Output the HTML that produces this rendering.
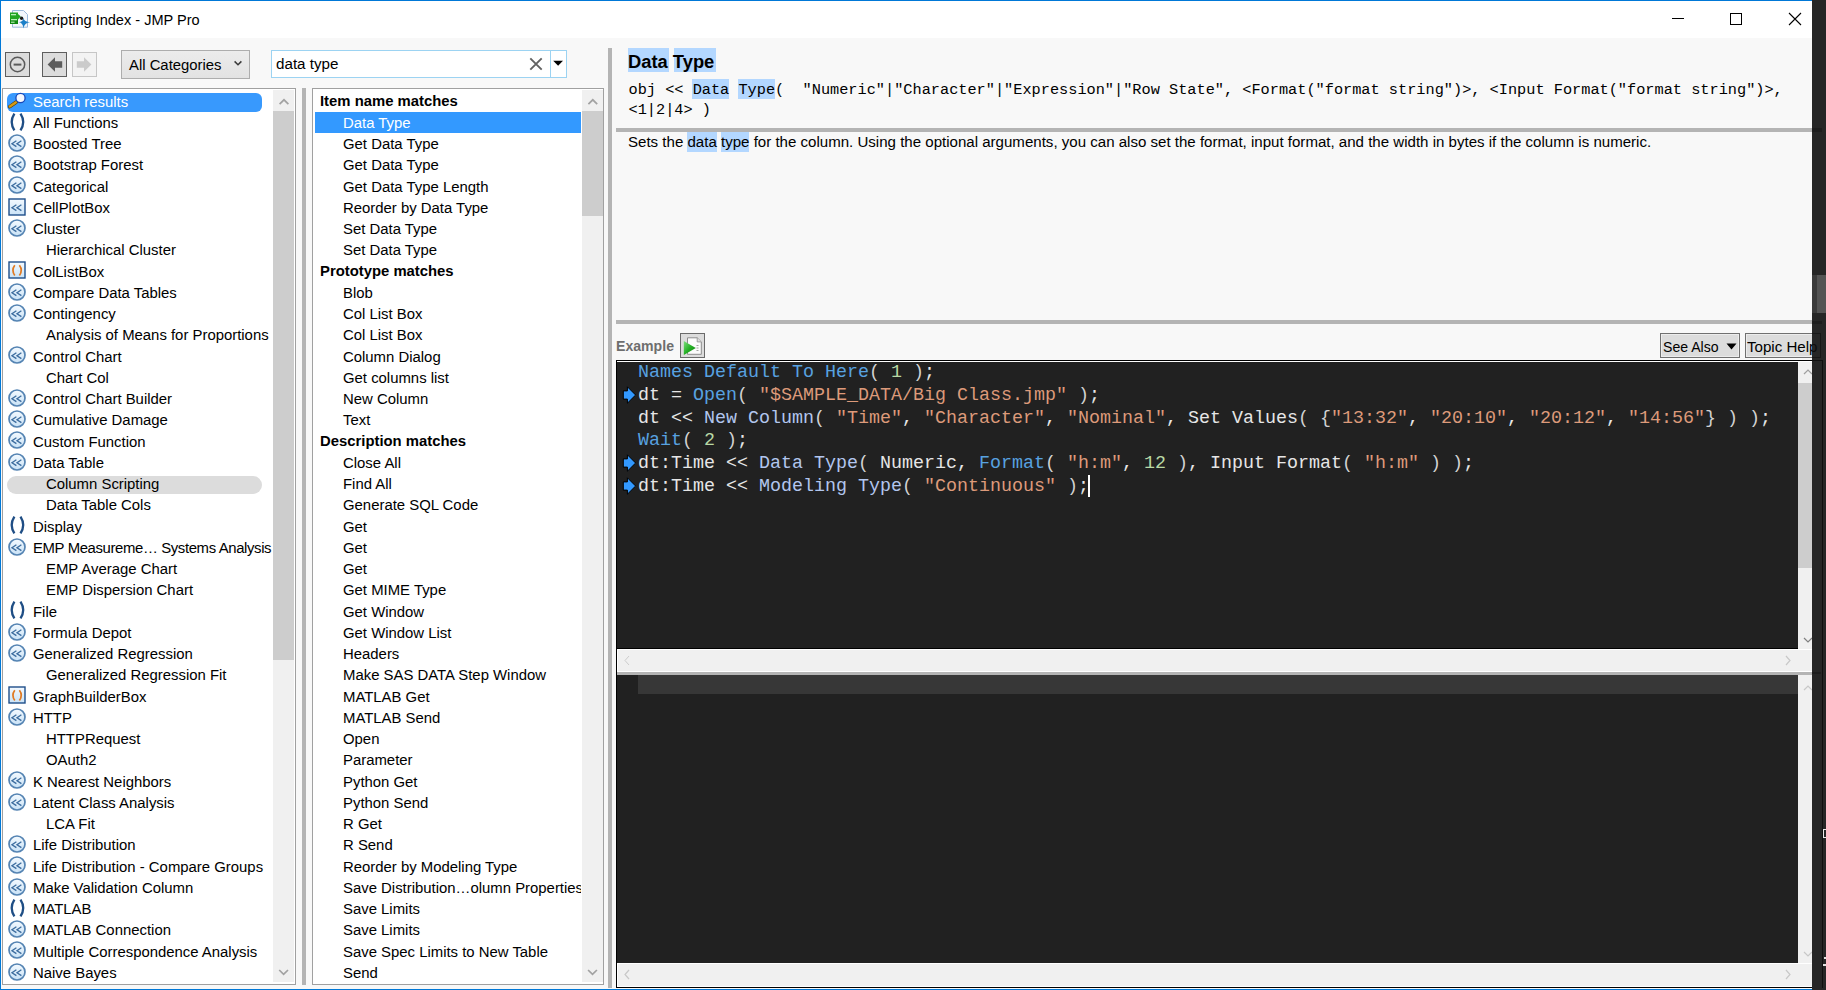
<!DOCTYPE html><html><head><meta charset="utf-8"><title>Scripting Index - JMP Pro</title><style>
*{margin:0;padding:0;box-sizing:border-box}
html,body{width:1826px;height:990px;overflow:hidden;background:#f8f8f8;font-family:"Liberation Sans",sans-serif;color:#000}
.a{position:absolute}
.clip{overflow:hidden}
.panel{background:#fff;border:1px solid #a0a0a0}
.lt{font-size:14.9px;line-height:21.25px;height:21.25px;padding-top:0.9px;white-space:nowrap;color:#000}
.lt.w{color:#fff}
.lt.b{font-weight:bold;font-size:14.85px;padding-top:0.6px}
.sel{background:#3399ff}
.sel-pill{background:#3899fd;border-radius:6px}
.sub-pill{background:#dcdcdc;border-radius:9px}
.ic{overflow:visible}
.mono{font-family:"Liberation Mono",monospace;white-space:pre}
.code{font-family:"Liberation Mono",monospace;white-space:pre;font-size:18.33px;line-height:22.66px;color:#dcdcdc}
.sb{background:#f0f0f0}
.thumb{background:#cdcdcd}
.hl{background:#b3d7ff}

</style></head><body>
<svg width="0" height="0" style="position:absolute">
<defs>
<linearGradient id="gc" x1="0" y1="0" x2="0" y2="1"><stop offset="0" stop-color="#f4faff"/><stop offset="1" stop-color="#c9e2f6"/></linearGradient>
<symbol id="i-circ" viewBox="0 0 18 18"><circle cx="9" cy="9" r="8" fill="url(#gc)" stroke="#5584b3" stroke-width="1.7"/><path d="M8.4 6.8 L4.0 9.7 L8.4 12.6 M13.4 6.8 L9.0 9.7 L13.4 12.6" fill="none" stroke="#3d6d9f" stroke-width="1.35"/></symbol>
<symbol id="i-sq" viewBox="0 0 18 18"><rect x="1" y="1" width="16" height="16" fill="url(#gc)" stroke="#1f4f8a" stroke-width="1.4"/><path d="M8.4 6.8 L4.0 9.7 L8.4 12.6 M13.4 6.8 L9.0 9.7 L13.4 12.6" fill="none" stroke="#3d6d9f" stroke-width="1.35"/></symbol>
<symbol id="i-sqp" viewBox="0 0 18 18"><rect x="1" y="1" width="16" height="16" fill="url(#gc)" stroke="#1f4f8a" stroke-width="1.4"/><path d="M6.8 4.2 Q3.0 9.3 6.8 14.4 M11.4 4.2 Q15.2 9.3 11.4 14.4" fill="none" stroke="#e07a22" stroke-width="1.7"/></symbol>
<symbol id="i-paren" viewBox="0 0 18 18"><path d="M6.4 0.6 Q1.0 9 6.4 17.4 M12.5 0.6 Q17.9 9 12.5 17.4" fill="none" stroke="#1f4e85" stroke-width="2.3"/></symbol>
<symbol id="i-search" viewBox="0 0 18 18"><path d="M1.8 15.6 L8 11.2" stroke="#5a3c00" stroke-width="3.6" stroke-linecap="round"/><path d="M1.8 15.6 L8 11.2" stroke="#d39a14" stroke-width="2.4" stroke-linecap="round"/><circle cx="12.5" cy="7.05" r="4.6" fill="#f4f8ff" stroke="#1a48b8" stroke-width="1.3"/></symbol>
</defs></svg>

<!-- title bar -->
<div class="a" style="left:0;top:0;width:1812px;height:38px;background:#fff"></div>
<svg class="a" style="left:6px;top:6px" width="28" height="28" viewBox="6 6 28 28">
 <path d="M12.5 10.5 H23.5 L27.5 14.5 V27.2 H12.5 Z" fill="#f3f7fc" stroke="#9cbadb" stroke-width="1"/>
 <path d="M10 12.5 H18 V14 L20.8 16.5 L18 19.5 V24 H10 Z" fill="#22a622"/>
 <path d="M10 19.5 H18 V24 H10 Z" fill="#138a13"/>
 <rect x="11" y="14" width="5" height="1.3" fill="#b9f0b9"/>
 <rect x="11" y="19" width="6" height="1.3" fill="#b9f0b9"/>
 <rect x="11" y="21.6" width="3.6" height="1.3" fill="#a0e0a0"/>
 <circle cx="21.6" cy="18.3" r="1.7" fill="#1a1a1a"/>
 <path d="M23.5 18.3 Q24 21.6 30 22.2 Q24 22.8 23.5 28.6 Q23 22.8 19 22.2 Q23 21.6 23.5 18.3 Z" fill="#1a7fc8"/>
</svg>
<div class="a" style="left:35px;top:10px;font-size:14.55px;line-height:20px;white-space:nowrap">Scripting Index - JMP Pro</div>
<div class="a" style="left:1672px;top:18px;width:12px;height:1px;background:#000"></div>
<div class="a" style="left:1730px;top:13px;width:12px;height:12px;border:1px solid #000"></div>
<svg class="a" style="left:1788px;top:12px" width="14" height="14" viewBox="0 0 14 14"><path d="M1 1 L13 13 M13 1 L1 13" stroke="#000" stroke-width="1.1"/></svg>
<!-- window borders -->
<div class="a" style="left:0;top:0;width:1812px;height:1px;background:#0078d7"></div>
<div class="a" style="left:0;top:0;width:1px;height:990px;background:#0078d7"></div>
<div class="a" style="left:0;top:989px;width:1812px;height:1px;background:#0078d7"></div>

<!-- toolbar buttons -->
<div class="a" style="left:5px;top:52px;width:25px;height:25px;background:#dcdcdc;border:1px solid #5e5e5e"></div>
<svg class="a" style="left:5px;top:52px" width="25" height="25" viewBox="0 0 25 25"><circle cx="12.5" cy="12.5" r="7.2" fill="none" stroke="#5a5a5a" stroke-width="1.5"/><rect x="8.6" y="11.6" width="7.8" height="2" fill="#5a5a5a"/></svg>
<div class="a" style="left:42px;top:52px;width:25px;height:25px;background:#dcdcdc;border:1px solid #5e5e5e"></div>
<svg class="a" style="left:42px;top:52px" width="25" height="25" viewBox="0 0 25 25"><path d="M5.6 12.5 L13 5.2 V9.2 H20.2 V15.8 H13 V19.8 Z" fill="#5c5c5c"/></svg>
<div class="a" style="left:72px;top:52px;width:25px;height:25px;background:#f3f3f3;border:1px solid #c6c6c6"></div>
<svg class="a" style="left:72px;top:52px" width="25" height="25" viewBox="0 0 25 25"><path d="M19.4 12.5 L12 5.2 V9.2 H4.8 V15.8 H12 V19.8 Z" fill="#cbcbcb"/></svg>

<!-- category dropdown -->
<div class="a" style="left:121px;top:50px;width:129px;height:29px;background:linear-gradient(#ececec,#e2e2e2);border:1px solid #adadad"></div>
<div class="a" style="left:129px;top:55px;font-size:14.86px;line-height:21px;white-space:nowrap">All Categories</div>
<svg class="a" style="left:233px;top:60px" width="10" height="7" viewBox="0 0 10 7"><path d="M1.6 1.4 L5 4.8 L8.4 1.4" fill="none" stroke="#3a3a3a" stroke-width="1.5"/></svg>

<!-- search box -->
<div class="a" style="left:271px;top:50px;width:296px;height:28px;background:#fff;border:1px solid #9cd3f2"></div>
<div class="a" style="left:276px;top:52.8px;font-size:15.2px;line-height:21px;white-space:nowrap">data type</div>
<svg class="a" style="left:528px;top:56px" width="16" height="16" viewBox="0 0 16 16"><path d="M2.3 2.3 L13.7 13.7 M13.7 2.3 L2.3 13.7" stroke="#626262" stroke-width="1.9"/></svg>
<div class="a" style="left:550px;top:51px;width:1px;height:26px;background:#9cd3f2"></div>
<svg class="a" style="left:553px;top:59px" width="11" height="8" viewBox="0 0 11 8"><path d="M0.2 1.8 H10 L5.1 6.8 Z" fill="#000"/></svg>

<div class="a panel" style="left:2px;top:88px;width:294px;height:897px"></div>
<div class="a clip" style="left:3px;top:89px;width:270px;height:895px">
<div class="a sel-pill" style="left:4px;top:4.0px;width:255px;height:18.75px"></div>
<svg class="a ic" style="left:5px;top:2.35px" width="18" height="18"><use href="#i-search"/></svg>
<div class="a lt w" style="left:30px;top:1.75px;">Search results</div>
<svg class="a ic" style="left:5px;top:23.6px" width="18" height="18"><use href="#i-paren"/></svg>
<div class="a lt" style="left:30px;top:23.0px;">All Functions</div>
<svg class="a ic" style="left:5px;top:44.85px" width="18" height="18"><use href="#i-circ"/></svg>
<div class="a lt" style="left:30px;top:44.25px;">Boosted Tree</div>
<svg class="a ic" style="left:5px;top:66.1px" width="18" height="18"><use href="#i-circ"/></svg>
<div class="a lt" style="left:30px;top:65.5px;">Bootstrap Forest</div>
<svg class="a ic" style="left:5px;top:87.35px" width="18" height="18"><use href="#i-circ"/></svg>
<div class="a lt" style="left:30px;top:86.75px;">Categorical</div>
<svg class="a ic" style="left:5px;top:108.6px" width="18" height="18"><use href="#i-sq"/></svg>
<div class="a lt" style="left:30px;top:108.0px;">CellPlotBox</div>
<svg class="a ic" style="left:5px;top:129.85px" width="18" height="18"><use href="#i-circ"/></svg>
<div class="a lt" style="left:30px;top:129.25px;">Cluster</div>
<div class="a lt" style="left:43px;top:150.5px;">Hierarchical Cluster</div>
<svg class="a ic" style="left:5px;top:172.35px" width="18" height="18"><use href="#i-sqp"/></svg>
<div class="a lt" style="left:30px;top:171.75px;">ColListBox</div>
<svg class="a ic" style="left:5px;top:193.6px" width="18" height="18"><use href="#i-circ"/></svg>
<div class="a lt" style="left:30px;top:193.0px;">Compare Data Tables</div>
<svg class="a ic" style="left:5px;top:214.85px" width="18" height="18"><use href="#i-circ"/></svg>
<div class="a lt" style="left:30px;top:214.25px;">Contingency</div>
<div class="a lt" style="left:43px;top:235.5px;">Analysis of Means for Proportions</div>
<svg class="a ic" style="left:5px;top:257.35px" width="18" height="18"><use href="#i-circ"/></svg>
<div class="a lt" style="left:30px;top:256.75px;">Control Chart</div>
<div class="a lt" style="left:43px;top:278.0px;">Chart Col</div>
<svg class="a ic" style="left:5px;top:299.85px" width="18" height="18"><use href="#i-circ"/></svg>
<div class="a lt" style="left:30px;top:299.25px;">Control Chart Builder</div>
<svg class="a ic" style="left:5px;top:321.1px" width="18" height="18"><use href="#i-circ"/></svg>
<div class="a lt" style="left:30px;top:320.5px;">Cumulative Damage</div>
<svg class="a ic" style="left:5px;top:342.35px" width="18" height="18"><use href="#i-circ"/></svg>
<div class="a lt" style="left:30px;top:341.75px;">Custom Function</div>
<svg class="a ic" style="left:5px;top:363.6px" width="18" height="18"><use href="#i-circ"/></svg>
<div class="a lt" style="left:30px;top:363.0px;">Data Table</div>
<div class="a sub-pill" style="left:4px;top:386.5px;width:255px;height:18.75px"></div>
<div class="a lt" style="left:43px;top:384.25px;">Column Scripting</div>
<div class="a lt" style="left:43px;top:405.5px;">Data Table Cols</div>
<svg class="a ic" style="left:5px;top:427.35px" width="18" height="18"><use href="#i-paren"/></svg>
<div class="a lt" style="left:30px;top:426.75px;">Display</div>
<svg class="a ic" style="left:5px;top:448.6px" width="18" height="18"><use href="#i-circ"/></svg>
<div class="a lt" style="left:30px;top:448.0px;letter-spacing:-0.37px;">EMP Measureme… Systems Analysis</div>
<div class="a lt" style="left:43px;top:469.25px;">EMP Average Chart</div>
<div class="a lt" style="left:43px;top:490.5px;">EMP Dispersion Chart</div>
<svg class="a ic" style="left:5px;top:512.35px" width="18" height="18"><use href="#i-paren"/></svg>
<div class="a lt" style="left:30px;top:511.75px;">File</div>
<svg class="a ic" style="left:5px;top:533.6px" width="18" height="18"><use href="#i-circ"/></svg>
<div class="a lt" style="left:30px;top:533.0px;">Formula Depot</div>
<svg class="a ic" style="left:5px;top:554.85px" width="18" height="18"><use href="#i-circ"/></svg>
<div class="a lt" style="left:30px;top:554.25px;">Generalized Regression</div>
<div class="a lt" style="left:43px;top:575.5px;">Generalized Regression Fit</div>
<svg class="a ic" style="left:5px;top:597.35px" width="18" height="18"><use href="#i-sqp"/></svg>
<div class="a lt" style="left:30px;top:596.75px;">GraphBuilderBox</div>
<svg class="a ic" style="left:5px;top:618.6px" width="18" height="18"><use href="#i-circ"/></svg>
<div class="a lt" style="left:30px;top:618.0px;">HTTP</div>
<div class="a lt" style="left:43px;top:639.25px;">HTTPRequest</div>
<div class="a lt" style="left:43px;top:660.5px;">OAuth2</div>
<svg class="a ic" style="left:5px;top:682.35px" width="18" height="18"><use href="#i-circ"/></svg>
<div class="a lt" style="left:30px;top:681.75px;">K Nearest Neighbors</div>
<svg class="a ic" style="left:5px;top:703.6px" width="18" height="18"><use href="#i-circ"/></svg>
<div class="a lt" style="left:30px;top:703.0px;">Latent Class Analysis</div>
<div class="a lt" style="left:43px;top:724.25px;">LCA Fit</div>
<svg class="a ic" style="left:5px;top:746.1px" width="18" height="18"><use href="#i-circ"/></svg>
<div class="a lt" style="left:30px;top:745.5px;">Life Distribution</div>
<svg class="a ic" style="left:5px;top:767.35px" width="18" height="18"><use href="#i-circ"/></svg>
<div class="a lt" style="left:30px;top:766.75px;">Life Distribution - Compare Groups</div>
<svg class="a ic" style="left:5px;top:788.6px" width="18" height="18"><use href="#i-circ"/></svg>
<div class="a lt" style="left:30px;top:788.0px;">Make Validation Column</div>
<svg class="a ic" style="left:5px;top:809.85px" width="18" height="18"><use href="#i-paren"/></svg>
<div class="a lt" style="left:30px;top:809.25px;">MATLAB</div>
<svg class="a ic" style="left:5px;top:831.1px" width="18" height="18"><use href="#i-circ"/></svg>
<div class="a lt" style="left:30px;top:830.5px;">MATLAB Connection</div>
<svg class="a ic" style="left:5px;top:852.35px" width="18" height="18"><use href="#i-circ"/></svg>
<div class="a lt" style="left:30px;top:851.75px;">Multiple Correspondence Analysis</div>
<svg class="a ic" style="left:5px;top:873.6px" width="18" height="18"><use href="#i-circ"/></svg>
<div class="a lt" style="left:30px;top:873.0px;">Naive Bayes</div>
</div>
<div class="a sb" style="left:273px;top:90px;width:21px;height:892px"></div>
<div class="a thumb" style="left:273px;top:111px;width:21px;height:549px"></div>
<svg class="a" style="left:276px;top:95px" width="16" height="12" viewBox="0 0 16 12"><path d="M3.6 9.2 L8 4.8 L12.4 9.2" fill="none" stroke="#a2a2a2" stroke-width="1.7"/></svg>
<svg class="a" style="left:276px;top:966px" width="16" height="12" viewBox="0 0 16 12"><path d="M3.2 4 L7.6 8.4 L12 4" fill="none" stroke="#a2a2a2" stroke-width="1.7"/></svg>
<!-- splitter -->
<div class="a" style="left:302px;top:88px;width:4px;height:897px;background:#b4b4b4"></div>

<div class="a panel" style="left:312px;top:88px;width:292px;height:897px"></div>
<div class="a clip" style="left:313px;top:89px;width:268px;height:895px">
<div class="a lt b" style="left:7px;top:1.75px">Item name matches</div>
<div class="a sel" style="left:2px;top:22.5px;width:266px;height:21px"></div>
<div class="a lt w" style="left:30px;top:23.0px">Data Type</div>
<div class="a lt" style="left:30px;top:44.25px">Get Data Type</div>
<div class="a lt" style="left:30px;top:65.5px">Get Data Type</div>
<div class="a lt" style="left:30px;top:86.75px">Get Data Type Length</div>
<div class="a lt" style="left:30px;top:108.0px">Reorder by Data Type</div>
<div class="a lt" style="left:30px;top:129.25px">Set Data Type</div>
<div class="a lt" style="left:30px;top:150.5px">Set Data Type</div>
<div class="a lt b" style="left:7px;top:171.75px">Prototype matches</div>
<div class="a lt" style="left:30px;top:193.0px">Blob</div>
<div class="a lt" style="left:30px;top:214.25px">Col List Box</div>
<div class="a lt" style="left:30px;top:235.5px">Col List Box</div>
<div class="a lt" style="left:30px;top:256.75px">Column Dialog</div>
<div class="a lt" style="left:30px;top:278.0px">Get columns list</div>
<div class="a lt" style="left:30px;top:299.25px">New Column</div>
<div class="a lt" style="left:30px;top:320.5px">Text</div>
<div class="a lt b" style="left:7px;top:341.75px">Description matches</div>
<div class="a lt" style="left:30px;top:363.0px">Close All</div>
<div class="a lt" style="left:30px;top:384.25px">Find All</div>
<div class="a lt" style="left:30px;top:405.5px">Generate SQL Code</div>
<div class="a lt" style="left:30px;top:426.75px">Get</div>
<div class="a lt" style="left:30px;top:448.0px">Get</div>
<div class="a lt" style="left:30px;top:469.25px">Get</div>
<div class="a lt" style="left:30px;top:490.5px">Get MIME Type</div>
<div class="a lt" style="left:30px;top:511.75px">Get Window</div>
<div class="a lt" style="left:30px;top:533.0px">Get Window List</div>
<div class="a lt" style="left:30px;top:554.25px">Headers</div>
<div class="a lt" style="left:30px;top:575.5px">Make SAS DATA Step Window</div>
<div class="a lt" style="left:30px;top:596.75px">MATLAB Get</div>
<div class="a lt" style="left:30px;top:618.0px">MATLAB Send</div>
<div class="a lt" style="left:30px;top:639.25px">Open</div>
<div class="a lt" style="left:30px;top:660.5px">Parameter</div>
<div class="a lt" style="left:30px;top:681.75px">Python Get</div>
<div class="a lt" style="left:30px;top:703.0px">Python Send</div>
<div class="a lt" style="left:30px;top:724.25px">R Get</div>
<div class="a lt" style="left:30px;top:745.5px">R Send</div>
<div class="a lt" style="left:30px;top:766.75px">Reorder by Modeling Type</div>
<div class="a lt" style="left:30px;top:788.0px">Save Distribution…olumn Properties</div>
<div class="a lt" style="left:30px;top:809.25px">Save Limits</div>
<div class="a lt" style="left:30px;top:830.5px">Save Limits</div>
<div class="a lt" style="left:30px;top:851.75px">Save Spec Limits to New Table</div>
<div class="a lt" style="left:30px;top:873.0px">Send</div>
</div>
<div class="a sb" style="left:582px;top:90px;width:21px;height:892px"></div>
<div class="a thumb" style="left:582px;top:111px;width:21px;height:105px"></div>
<svg class="a" style="left:585px;top:95px" width="16" height="12" viewBox="0 0 16 12"><path d="M3.4 9.2 L7.8 4.8 L12.2 9.2" fill="none" stroke="#a2a2a2" stroke-width="1.7"/></svg>
<svg class="a" style="left:585px;top:966px" width="16" height="12" viewBox="0 0 16 12"><path d="M3.1 4 L7.5 8.4 L11.9 4" fill="none" stroke="#a2a2a2" stroke-width="1.7"/></svg>
<!-- splitter -->
<div class="a" style="left:608px;top:48px;width:4px;height:940px;background:#b4b4b4"></div>

<div class="a hl" style="left:628px;top:48px;width:41px;height:24px"></div>
<div class="a hl" style="left:674px;top:48px;width:42px;height:24px"></div>
<div class="a" style="left:628px;top:50px;font-size:18.35px;line-height:24px;font-weight:bold;white-space:nowrap">Data Type</div>
<div class="a hl" style="left:692px;top:79px;width:37px;height:20px"></div>
<div class="a hl" style="left:738px;top:79px;width:37px;height:20px"></div>
<div class="a mono" style="left:628.5px;top:80px;font-size:15.28px;line-height:20px">obj &lt;&lt; Data Type(  &quot;Numeric&quot;|&quot;Character&quot;|&quot;Expression&quot;|&quot;Row State&quot;, &lt;Format(&quot;format string&quot;)&gt;, &lt;Input Format(&quot;format string&quot;)&gt;,<br>&lt;1|2|4&gt; )</div>
<div class="a" style="left:616px;top:128px;width:1196px;height:4px;background:#b4b4b4"></div>
<div class="a" style="left:628px;top:132px;font-size:15.07px;line-height:20px;white-space:nowrap">Sets the <span style="background:#b3d7ff;padding:1.3px 0 1.6px">data</span> <span style="background:#b3d7ff;padding:1.3px 0 1.6px">type</span> for the column. Using the optional arguments, you can also set the format, input format, and the width in bytes if the column is numeric.</div>
<div class="a" style="left:616px;top:320px;width:1196px;height:4px;background:#b4b4b4"></div>
<div class="a" style="left:616px;top:335.8px;font-size:14.1px;line-height:20px;font-weight:bold;color:#6e6e6e;white-space:nowrap">Example</div>
<div class="a" style="left:680px;top:333px;width:25px;height:25px;background:#dcdcdc;border:1px solid #6a6a6a"></div>
<svg class="a" style="left:680px;top:333px" width="25" height="25" viewBox="0 0 25 25">
<defs><linearGradient id="pg" x1="0" y1="0" x2="1" y2="1"><stop offset="0" stop-color="#7fe07f"/><stop offset="0.5" stop-color="#25b025"/><stop offset="1" stop-color="#0a7a0a"/></linearGradient></defs>
<path d="M7.5 4.8 H17.2 L21.3 8.9 V21.3 H7.5 Z" fill="#fbfbfb" stroke="#8c8c8c" stroke-width="1"/>
<path d="M17.2 4.8 V8.9 H21.3" fill="#dedede" stroke="#8c8c8c" stroke-width="0.8"/>
<path d="M16.5 12.5 h2 M16.5 15 h2 M16.5 17.5 h2" stroke="#9a9a9a" stroke-width="0.9"/>
<path d="M3.8 7.9 L15.8 14.9 L3.8 21.9 Z" fill="url(#pg)"/>
</svg>
<div class="a" style="left:1660px;top:333px;width:80px;height:25px;background:#dcdcdc;border:1px solid #707070;box-shadow:inset 0 0 0 1px #ececec"></div>
<div class="a" style="left:1663px;top:336.5px;font-size:14.1px;line-height:20px;white-space:nowrap">See Also</div>
<svg class="a" style="left:1726px;top:343px" width="11" height="8" viewBox="0 0 11 8"><path d="M0.5 0.5 H10.5 L5.5 6.5 Z" fill="#000"/></svg>
<div class="a" style="left:1745px;top:333px;width:78px;height:25px;background:#dcdcdc;border:1px solid #707070;box-shadow:inset 0 0 0 1px #ececec"></div>
<div class="a" style="left:1747px;top:337.2px;font-size:15.1px;line-height:20px;white-space:nowrap">Topic Help</div>
<div class="a" style="left:616px;top:360px;width:1207px;height:290px;background:#000"></div>
<div class="a" style="left:617px;top:361px;width:1195px;height:1px;background:#fff"></div>
<div class="a" style="left:617px;top:362px;width:1181px;height:286px;background:#212121"></div>
<div class="a sb" style="left:1798px;top:362px;width:14px;height:287px"></div>
<div class="a thumb" style="left:1798px;top:383px;width:14px;height:185px"></div>
<svg class="a" style="left:1802px;top:367px" width="12" height="9" viewBox="0 0 12 9"><path d="M2 7 L6 3 L10 7" fill="none" stroke="#a0a0a0" stroke-width="1.2"/></svg>
<svg class="a" style="left:1802px;top:636px" width="12" height="9" viewBox="0 0 12 9"><path d="M2 2 L6 6 L10 2" fill="none" stroke="#808080" stroke-width="1.2"/></svg>
<div class="a" style="left:617px;top:649px;width:1195px;height:23px;background:#fff"></div>
<div class="a sb" style="left:618px;top:650px;width:1194px;height:21px"></div>
<svg class="a" style="left:622px;top:654px" width="10" height="13" viewBox="0 0 10 13"><path d="M7 2 L3 6.5 L7 11" fill="none" stroke="#cdcdcd" stroke-width="1"/></svg>
<svg class="a" style="left:1783px;top:654px" width="10" height="13" viewBox="0 0 10 13"><path d="M3 2 L7 6.5 L3 11" fill="none" stroke="#c8c8c8" stroke-width="1.2"/></svg>
<div class="a code" style="left:638px;top:362.3px"><span style="color:#58a2e0">Names Default To Here</span><span style="color:#d2d2d2">( </span><span style="color:#b8d8a4">1</span><span style="color:#d2d2d2"> )</span><span style="color:#e6e6e6">;</span><br><span style="color:#e6e6e6">dt = </span><span style="color:#58a2e0">Open</span><span style="color:#d2d2d2">( </span><span style="color:#dd9a7a">&quot;$SAMPLE_DATA/Big Class.jmp&quot;</span><span style="color:#d2d2d2"> )</span><span style="color:#e6e6e6">;</span><br><span style="color:#e6e6e6">dt &lt;&lt; </span><span style="color:#b2c6ee">New Column</span><span style="color:#d2d2d2">( </span><span style="color:#dd9a7a">&quot;Time&quot;</span><span style="color:#e6e6e6">, </span><span style="color:#dd9a7a">&quot;Character&quot;</span><span style="color:#e6e6e6">, </span><span style="color:#dd9a7a">&quot;Nominal&quot;</span><span style="color:#e6e6e6">, </span><span style="color:#e6e6e6">Set Values</span><span style="color:#d2d2d2">( </span><span style="color:#d2d2d2">{</span><span style="color:#dd9a7a">&quot;13:32&quot;</span><span style="color:#e6e6e6">, </span><span style="color:#dd9a7a">&quot;20:10&quot;</span><span style="color:#e6e6e6">, </span><span style="color:#dd9a7a">&quot;20:12&quot;</span><span style="color:#e6e6e6">, </span><span style="color:#dd9a7a">&quot;14:56&quot;</span><span style="color:#d2d2d2">}</span><span style="color:#d2d2d2"> )</span><span style="color:#d2d2d2"> )</span><span style="color:#e6e6e6">;</span><br><span style="color:#58a2e0">Wait</span><span style="color:#d2d2d2">( </span><span style="color:#b8d8a4">2</span><span style="color:#d2d2d2"> )</span><span style="color:#e6e6e6">;</span><br><span style="color:#e6e6e6">dt:Time &lt;&lt; </span><span style="color:#b2c6ee">Data Type</span><span style="color:#d2d2d2">( </span><span style="color:#e6e6e6">Numeric</span><span style="color:#e6e6e6">, </span><span style="color:#58a2e0">Format</span><span style="color:#d2d2d2">( </span><span style="color:#dd9a7a">&quot;h:m&quot;</span><span style="color:#e6e6e6">, </span><span style="color:#b8d8a4">12</span><span style="color:#d2d2d2"> )</span><span style="color:#e6e6e6">, </span><span style="color:#e6e6e6">Input Format</span><span style="color:#d2d2d2">( </span><span style="color:#dd9a7a">&quot;h:m&quot;</span><span style="color:#d2d2d2"> )</span><span style="color:#d2d2d2"> )</span><span style="color:#e6e6e6">;</span><br><span style="color:#e6e6e6">dt:Time &lt;&lt; </span><span style="color:#b2c6ee">Modeling Type</span><span style="color:#d2d2d2">( </span><span style="color:#dd9a7a">&quot;Continuous&quot;</span><span style="color:#d2d2d2"> )</span><span style="color:#e6e6e6">;</span></div>
<div class="a" style="left:1087.5px;top:474.5px;width:2px;height:22px;background:#fff"></div>
<svg class="a" style="left:622px;top:386.06px" width="15" height="18" viewBox="0 0 15 18"><path d="M1.3 4.9 H5.4 V0.8 L13.6 9 L5.4 17.2 V13.1 H1.3 Z" fill="#3399ff" stroke="#000" stroke-width="1"/></svg>
<svg class="a" style="left:622px;top:454.04px" width="15" height="18" viewBox="0 0 15 18"><path d="M1.3 4.9 H5.4 V0.8 L13.6 9 L5.4 17.2 V13.1 H1.3 Z" fill="#3399ff" stroke="#000" stroke-width="1"/></svg>
<svg class="a" style="left:622px;top:476.70px" width="15" height="18" viewBox="0 0 15 18"><path d="M1.3 4.9 H5.4 V0.8 L13.6 9 L5.4 17.2 V13.1 H1.3 Z" fill="#3399ff" stroke="#000" stroke-width="1"/></svg>
<div class="a" style="left:617px;top:672px;width:1195px;height:3px;background:#b4b4b4"></div>
<div class="a" style="left:616px;top:675px;width:1207px;height:313px;background:#000"></div>
<div class="a" style="left:617px;top:675px;width:1181px;height:288px;background:#212121"></div>
<div class="a" style="left:638px;top:675px;width:1160px;height:19px;background:#373737"></div>
<div class="a sb" style="left:1798px;top:675px;width:14px;height:288px"></div>
<svg class="a" style="left:1802px;top:683px" width="12" height="9" viewBox="0 0 12 9"><path d="M2 7 L6 3 L10 7" fill="none" stroke="#c8c8c8" stroke-width="1.2"/></svg>
<svg class="a" style="left:1802px;top:950px" width="12" height="9" viewBox="0 0 12 9"><path d="M2 2 L6 6 L10 2" fill="none" stroke="#c8c8c8" stroke-width="1.2"/></svg>
<div class="a" style="left:617px;top:963px;width:1195px;height:24px;background:#fff"></div>
<div class="a sb" style="left:618px;top:964px;width:1194px;height:22px"></div>
<svg class="a" style="left:622px;top:968px" width="10" height="13" viewBox="0 0 10 13"><path d="M7 2 L3 6.5 L7 11" fill="none" stroke="#c8c8c8" stroke-width="1.2"/></svg>
<svg class="a" style="left:1783px;top:968px" width="10" height="13" viewBox="0 0 10 13"><path d="M3 2 L7 6.5 L3 11" fill="none" stroke="#c8c8c8" stroke-width="1.2"/></svg>
<div class="a" style="left:616px;top:360px;width:1px;height:628px;background:#000"></div>
<div class="a" style="left:1812px;top:0;width:14px;height:990px;background:#262626"></div>
<div class="a" style="left:1812px;top:275px;width:5px;height:38px;background:#3b3b3b"></div>
<div class="a" style="left:1817px;top:275px;width:9px;height:38px;background:#545454"></div>
<div class="a" style="left:1812px;top:321px;width:10px;height:3px;background:#1d1d1d"></div>
<div class="a" style="left:1812px;top:128px;width:10px;height:4px;background:#1d1d1d"></div>
<div class="a" style="left:1812px;top:333px;width:9px;height:25px;border:1px solid #171717;border-left:none"></div>
<div class="a" style="left:1812px;top:360px;width:11px;height:1px;background:#0f0f0f"></div>
<div class="a" style="left:1822px;top:360px;width:1px;height:628px;background:#0f0f0f"></div>
<div class="a" style="left:1812px;top:672px;width:9px;height:2px;background:#1d1d1d"></div>
<div class="a" style="left:1812px;top:333px;width:9px;height:25px;overflow:hidden"><div class="a" style="left:-65px;top:4.2px;font-size:15.1px;line-height:20px;white-space:nowrap;color:#0d0d0d">Topic Help</div></div>
<div class="a" style="left:1823px;top:829px;width:3px;height:9px;border:1px solid #e8e8e8;border-right:none"></div>
<div class="a" style="left:1824px;top:957px;width:2px;height:2px;background:#e0e0e0"></div>
<div class="a" style="left:1823px;top:964px;width:3px;height:2px;background:#e0e0e0"></div>
</body></html>
